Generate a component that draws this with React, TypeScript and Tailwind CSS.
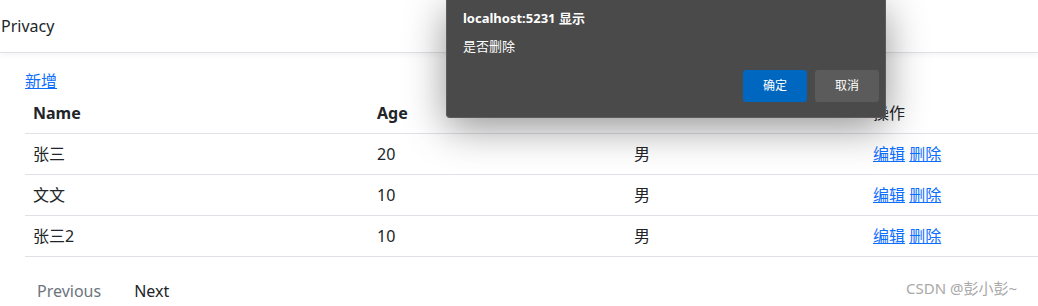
import React from 'react'

const rows = [
  { name: '张三', age: 20, sex: '男' },
  { name: '文文', age: 10, sex: '男' },
  { name: '张三2', age: 10, sex: '男' },
]

const font = "font-['Segoe_UI','Noto_Sans','Noto_Sans_CJK_SC',sans-serif]"

function ConfirmDialog() {
  return (
    <div className="absolute left-[446px] top-0 w-[440px] h-[118px] bg-[#4a4a4a] border border-[#5c5c5c] border-t-0 rounded-b-[4px] shadow-[0_10px_40px_rgba(0,0,0,0.42)] text-white">
      <div className="pl-[16px] pt-[9px]">
        <div className="text-[13px] leading-[18px] font-bold">localhost:5231 显示</div>
        <div className="text-[13px] leading-[18px] mt-[10px]">是否删除</div>
      </div>
      <div className="absolute right-[6px] top-[70px] flex gap-[8px]">
        <button className="w-[64px] h-[32px] rounded-[3px] bg-[#0067c0] text-[12px] text-white">确定</button>
        <button className="w-[64px] h-[32px] rounded-[3px] bg-[#5b5b5b] text-[12px] text-white">取消</button>
      </div>
    </div>
  )
}

export default function App() {
  return (
    <div className={`relative w-[1038px] h-[306px] overflow-hidden bg-white text-[#212529] text-[16px] ${font}`}>
      <header className="h-[53px] border-b border-[#dee2e6] shadow-[0_2px_6px_rgba(0,0,0,0.05)] flex items-center">
        <span className="leading-6 pl-[1px] text-[#212529]">Privacy</span>
      </header>

      <main className="pl-[25px] pt-[16px]">
        <a href="#" className="block w-fit leading-6 text-[#0d6efd] underline">新增</a>

        <table className="w-full table-fixed border-collapse">
          <thead>
            <tr className="border-b border-[#dee2e6]">
              <th className="w-[344px] px-2 py-2 text-left font-bold leading-6">Name</th>
              <th className="w-[257px] px-2 py-2 text-left font-bold leading-6">Age</th>
              <th className="w-[239px] px-2 py-2 text-left font-bold leading-6"></th>
              <th className="px-2 py-2 text-left font-normal leading-6">操作</th>
            </tr>
          </thead>
          <tbody>
            {rows.map((r, i) => (
              <tr key={i} className="border-b border-[#dee2e6]">
                <td className="px-2 py-2 leading-6">{r.name}</td>
                <td className="px-2 py-2 leading-6">{r.age}</td>
                <td className="px-2 py-2 leading-6">{r.sex}</td>
                <td className="px-2 py-2 leading-6">
                  <a href="#" className="text-[#0d6efd] underline">编辑</a>{' '}
                  <a href="#" className="text-[#0d6efd] underline">删除</a>
                </td>
              </tr>
            ))}
          </tbody>
        </table>

        <nav className="mt-[16px] flex">
          <span className="px-3 py-[6px] leading-6 text-[#6c757d]">Previous</span>
          <span className="ml-[9px] px-3 py-[6px] leading-6 text-[#212529]">Next</span>
        </nav>
      </main>

      <ConfirmDialog />

      <div className="absolute left-[906px] top-[278px] text-[15px] leading-5 text-[#a8a8a8]">CSDN @彭小彭~</div>
    </div>
  )
}
